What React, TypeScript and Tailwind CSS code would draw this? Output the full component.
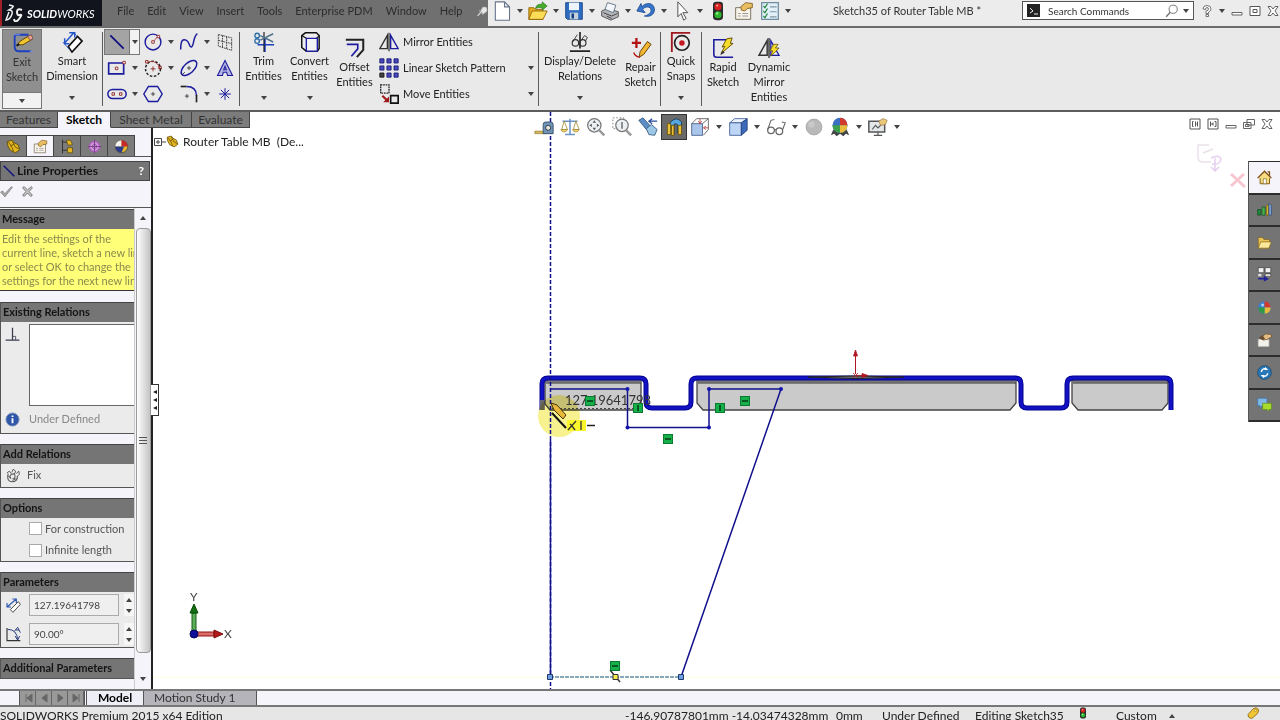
import clsx from "clsx";
import React from "react";

const NAVY = "#1b1b9e";

// Every glyph is drawn on a 24x24 grid.
const glyphs: Record<string, React.ReactNode> = {
  exitSketch: (
    <>
      <path d="M19 3H6q-2 0-2 2v11q0 5 5 5h13" stroke="#1c3fbf" strokeWidth="2" />
      <path d="M3 3h7M20 21h4" stroke="#7d9ae8" strokeWidth="1" />
      <path d="M7 14l3-4 10-6 3 4-10 6z" fill="#f0c530" stroke="#5c4300" />
      <path d="M18 5l4-2 2 4-3 2z" fill="#e7a49a" stroke="#6b3a33" strokeWidth=".8" />
      <path d="M6 15l3-2" stroke="#111" strokeWidth="2" />
    </>
  ),
  smartDim: (
    <>
      <path d="M8 17L18 6l5 5-11 12z" fill="#fff" stroke="#111" strokeWidth="1.8" />
      <path d="M4 13L14 2M4 8v6h5M9 2h6v5" stroke="#2456c8" strokeWidth="1.6" />
      <path d="M2 12l7 8M13 1l4 4" stroke="#2456c8" strokeWidth="1" />
    </>
  ),
  line: <path d="M4 4l16 16" stroke="#0d0d80" strokeWidth="2" />,
  circle: (
    <>
      <circle cx="12" cy="12" r="9.500" stroke={NAVY} strokeWidth="1.7" />
      <path d="M12 12l6-7" stroke="#a33" />
      <path d="M10.500 10.500h3v3h-3zM17 4h3v3h-3z" fill="#fff" stroke="#8b1a1a" />
    </>
  ),
  spline: <path d="M2 21C2 9 5 8 9 10s3 9 6 8 2-13 7-16" stroke={NAVY} strokeWidth="1.8" />,
  plane: (
    <path d="M4 3l16 4v15L4 17zM4 10l16 4M9 4v14M14 6v14" stroke="#444" strokeWidth="1.200" strokeDasharray="2 1" />
  ),
  rect: (
    <>
      <path d="M2 6h18v13H2z" stroke={NAVY} strokeWidth="2" />
      <path d="M10 11h3v3h-3zM19 4h3v3h-3z" fill="#fff" stroke="#8b1a1a" />
    </>
  ),
  arc: (
    <>
      <circle cx="12" cy="13" r="9" stroke="#222" strokeWidth="1.8" strokeDasharray="3 2" />
      <path d="M6 5a10 10 0 0 1 14 8" stroke="#a33" />
      <path d="M12 10v6M9 13h6M3 3h3v3H3zM19 10h3v3h-3z" stroke="#8b1a1a" />
    </>
  ),
  ellipse: (
    <>
      <ellipse cx="12" cy="12" rx="11.500" ry="6" transform="rotate(-42 12 12)" stroke={NAVY} strokeWidth="1.8" />
      <path d="M12 9.500v5M9.500 12h5M4 20l3-3" stroke="#333" />
    </>
  ),
  letterA: (
    <path d="M3 21L12 3l9 18h-6l-1-4h-4l-1 4zM10.500 14h3L12 10z" fill="#b5b5e2" stroke={NAVY} strokeWidth="1.3" />
  ),
  slot: (
    <>
      <rect x="1" y="6.500" width="22" height="11" rx="5.500" stroke={NAVY} strokeWidth="1.8" />
      <path d="M6 10.500h3v3H6zM15 10.500h3v3h-3z" stroke="#8b1a1a" />
    </>
  ),
  polygon: (
    <>
      <path d="M6.500 3h11l5.500 9-5.500 9h-11L1 12z" stroke={NAVY} strokeWidth="1.7" />
      <path d="M12 9.500v5M9.500 12h5" stroke="#333" />
    </>
  ),
  fillet: (
    <>
      <path d="M2 3h7" stroke="#222" strokeWidth="2" />
      <path d="M9 3q12 0 12 11" stroke={NAVY} strokeWidth="1.6" />
      <path d="M21 13v9" stroke="#222" strokeWidth="2" />
      <path d="M9.500 12v5M7 14.500h5" stroke="#333" />
    </>
  ),
  point: <path d="M12 5v14M5 12h14M7 7l10 10M17 7L7 17" stroke={NAVY} strokeWidth="1.2" />,
  trim: (
    <>
      <path d="M13 8v15M5 15h18" stroke="#1c3fbf" strokeWidth="1.8" />
      <path d="M12 1v22" stroke="#111" strokeWidth="1.2" />
      <path d="M22 3L8 10M22 12L8 5" stroke="#50718a" strokeWidth="1.6" />
      <circle cx="4.500" cy="5" r="2.500" stroke="#2d6fa8" strokeWidth="1.5" />
      <circle cx="4.500" cy="11" r="2.500" stroke="#2d6fa8" strokeWidth="1.5" />
    </>
  ),
  convert: (
    <>
      <path d="M3 5l4-3h12l3 3v14l-2 3H8l-5-4z" fill="#eee" stroke="#111" strokeWidth="1.600" />
      <path d="M3 5l5 3M22 5l-3 3" stroke="#111" strokeWidth="1.3" />
      <path d="M8 8h12v14H8z" stroke="#1c1ca8" strokeWidth="1.5" fill="#f4f4f4" />
    </>
  ),
  offset: (
    <>
      <path d="M2 3h19v11l-7 8" stroke="#222" strokeWidth="2.200" />
      <path d="M3 8h12v5l-7 8" stroke={NAVY} strokeWidth="1.8" />
    </>
  ),
  mirror: (
    <>
      <path d="M12 1v22" stroke="#222" strokeWidth="1.4" />
      <path d="M10 4v16H1z" stroke="#333" strokeWidth="1.600" />
      <path d="M14 4v16h9z" stroke={NAVY} strokeWidth="1.600" />
    </>
  ),
  pattern: (
    <>
      <path d="M1 1h5v5H1zM9.500 1h5v5h-5zM18 1h5v5h-5zM1 9.500h5v5H1zM9.500 9.500h5v5h-5zM18 9.500h5v5h-5zM9.500 18h5v5h-5zM18 18h5v5h-5z" fill="#4a4ac0" stroke="#15156e" />
      <path d="M1 18h5v5H1z" fill="#444" stroke="#111" />
    </>
  ),
  move: (
    <>
      <path d="M2 1h10v10H2z" stroke="#222" strokeWidth="1.600" strokeDasharray="2 1" />
      <path d="M14 14h9v9h-9z" stroke="#111" strokeWidth="2" />
      <path d="M4 14l5 5" stroke="#a01818" strokeWidth="2.500" />
      <path d="M12 22H5l7-7z" fill="#a01818" />
    </>
  ),
  relations: (
    <>
      <path d="M12 1v18M1 22h22" stroke="#222" strokeWidth="1.8" />
      <circle cx="7" cy="13" r="3.500" stroke="#333" strokeWidth="1.300" />
      <circle cx="15" cy="13" r="3.500" stroke="#333" strokeWidth="1.300" />
      <path d="M4 12l5-8M12 12l5-7 3 2M18 11l2-4" stroke="#333" />
    </>
  ),
  repair: (
    <>
      <path d="M7 1v11M2 6.500h10" stroke="#b31212" strokeWidth="2.500" />
      <path d="M11 16l8-11 4 3-8 11-5 3z" fill="#f2b632" stroke="#5c3a00" />
      <path d="M4 17q2 5 7 5" stroke="#b31212" strokeWidth="1.500" />
    </>
  ),
  snaps: (
    <>
      <path d="M2 23V2h20" stroke="#a01820" strokeWidth="2" />
      <circle cx="13" cy="13" r="8" stroke="#222" strokeWidth="1.800" />
      <circle cx="13" cy="13" r="3" fill="#c41822" />
    </>
  ),
  rapid: (
    <>
      <path d="M17 3H2v16q0 3 3 3h18" stroke={NAVY} strokeWidth="1.700" />
      <path d="M16 2l6-1-2 6h3L10 18l4-8-3 1z" fill="#f8dc2c" stroke="#5c4a00" />
      <path d="M9 20l2-5 3 2z" fill="#333" />
    </>
  ),
  dynamicMirror: (
    <>
      <path d="M12 1v22" stroke="#222" strokeWidth="1.400" />
      <path d="M10 4v16H1z" stroke="#333" strokeWidth="1.600" />
      <path d="M14 4v16h9z" stroke={NAVY} strokeWidth="1.400" />
      <path d="M17 8h5l-3 4h4l-9 9 2-6h-3z" fill="#f8dc2c" stroke="#5c4a00" strokeWidth=".8" />
    </>
  ),
  newDoc: <path d="M4 1h11l6 6v16H4zM15 1v6h6" fill="#fff" stroke="#667389" strokeWidth="1.300" />,
  open: (
    <>
      <path d="M1 22V8h6l2 2h9v12z" fill="#e5a91c" stroke="#8a6000" />
      <path d="M1 22l4-10h18l-5 10z" fill="#fbdc56" stroke="#8a6000" />
      <path d="M9 9q1-6 8-5V1l6 5-6 5V8q-5-1-8 1z" fill="#45ae2b" stroke="#1f6d14" strokeWidth=".7" />
    </>
  ),
  save: (
    <>
      <path d="M2 2h20v20H4l-2-2z" fill="#2d6cc0" stroke="#123e80" />
      <path d="M6 2h12v9H6z" fill="#eef4fb" />
      <path d="M7 14h10v8H7z" fill="#c5cfdb" />
      <path d="M9 15h3v6H9z" fill="#123e80" />
    </>
  ),
  print: (
    <>
      <path d="M2 12l7-3 13 4v6l-9 4-11-5z" fill="#b4b6ba" stroke="#444" />
      <path d="M6 10l3-8 10 3-3 9z" fill="#f4f7fc" stroke="#567" />
      <path d="M4 14l10 4 7-3M8 18l6 3" stroke="#333" />
    </>
  ),
  undo: (
    <path d="M6 3L1 12l10 2-3-4c3-4 10-4 10 1 0 4-4 6-8 7 9 2 13-4 12-9C21 2 12 1 7 7z" fill="#3776cf" stroke="#1e4788" />
  ),
  cursor: <path d="M7 1l12 13h-6l4 7-3 2-3-8-4 4z" fill="#fdfdfd" stroke="#555" strokeWidth="1.200" />,
  traffic: (
    <>
      <rect x="6" y="1" width="12" height="22" rx="4" fill="#2b2b2b" />
      <circle cx="12" cy="7" r="4.300" fill="#d92020" />
      <circle cx="12" cy="16.500" r="4.300" fill="#2bb52b" />
      <circle cx="11" cy="5.500" r="1.300" fill="#ff9a9a" />
      <circle cx="11" cy="15" r="1.400" fill="#aaf59a" />
    </>
  ),
  props: (
    <>
      <path d="M2 8h18v14H2z" fill="#f8f4ea" stroke="#665c48" />
      <path d="M5 15h3M5 18h3M10 15h7M10 18h7" stroke="#888" />
      <path d="M8 7l6-5 8 1v5l-6 1-3 3-4-1z" fill="#e9bd62" stroke="#7d5818" />
    </>
  ),
  options: (
    <>
      <path d="M2 2h20v20H2z" fill="#e2eff6" stroke="#6e8da0" strokeWidth="1.500" />
      <path d="M12 7h8M12 13h8M12 19h8" stroke="#7c98a8" strokeWidth="1.300" />
      <path d="M4 6l2 2 3-5M4 12l2 2 3-5M4 18l2 2 3-5" stroke="#2d8a4b" strokeWidth="1.500" />
    </>
  ),
  tape: (
    <>
      <path d="M1 17h13v3H1z" fill="#d8bb55" stroke="#7e6820" strokeWidth=".7" />
      <path d="M11 9q0-3 3-3h6q3 0 3 3v11H11z" fill="#6d93b8" stroke="#31455a" />
      <circle cx="17" cy="13" r="3" fill="#e8e8e8" stroke="#222" />
    </>
  ),
  scales: (
    <>
      <path d="M12 2v18M3 5h18M6 21h12" stroke="#6a92c4" strokeWidth="1.800" />
      <path d="M5 5l-3 10h7zM19 5l-3 10h7z" stroke="#a88b34" />
      <path d="M1 15h8q-1 3-4 3t-4-3zM15 15h8q-1 3-4 3t-4-3z" fill="#ecd06c" stroke="#94772a" strokeWidth=".7" />
    </>
  ),
  zoomFit: (
    <>
      <circle cx="10" cy="10" r="8" fill="#edf0f2" stroke="#777" strokeWidth="1.500" />
      <path d="M10 4l2 3H8zM10 16l2-3H8zM4 10l3-2v4zM16 10l-3-2v4z" fill="#555" />
      <path d="M16 16l6 6" stroke="#999" strokeWidth="3" />
    </>
  ),
  zoomArea: (
    <>
      <path d="M1 1h13v13H1z" stroke="#777" strokeDasharray="2 2" />
      <circle cx="12" cy="10" r="7.500" fill="#edf0f2" stroke="#777" strokeWidth="1.500" />
      <path d="M12 6v8" stroke="#555" strokeWidth="1.500" />
      <path d="M17 16l6 6" stroke="#999" strokeWidth="3" />
    </>
  ),
  prevView: (
    <>
      <path d="M1 4l5-3 9 10-5 4z" fill="#5b8ec7" stroke="#31547e" />
      <path d="M10 14l6-5 7 6-3 7-7-1z" fill="#9cc8e6" stroke="#31547e" />
      <path d="M13 5h10M17 2l-4 3 4 3" stroke="#2a4f9c" strokeWidth="1.500" />
    </>
  ),
  section: (
    <>
      <path d="M7 7q8-9 14-1v13h-5V9q-2-2-4 0v11z" fill="#57a8e0" stroke="#17314a" />
      <path d="M4 8h4v13H4zM9 10h3v12H9zM17 10h4v11h-4z" fill="#e9c13a" stroke="#6c5200" />
    </>
  ),
  viewCube: (
    <>
      <path d="M2 8l6-6h14v13l-6 7" fill="#fff" stroke="#555" />
      <path d="M2 8h13v14H2z" fill="#a9c6ea" stroke="#425a86" />
      <path d="M15 8l7-6" stroke="#555" />
      <path d="M12 2v6M17 13h5M10 5l2 3 2-3M19 11l-3 2 3 2" stroke="#b33a3a" />
    </>
  ),
  cube: (
    <>
      <path d="M2 7l6-5h15l-7 5z" fill="#edf4fd" stroke="#3c5a94" />
      <path d="M2 7h14v15H2z" fill="#bdd6f5" stroke="#3c5a94" />
      <path d="M16 7l7-5v14l-7 6z" fill="#3c69ba" stroke="#233f76" />
    </>
  ),
  glasses: (
    <>
      <circle cx="6" cy="16" r="4" stroke="#666" strokeWidth="1.500" />
      <circle cx="16" cy="17" r="4" stroke="#666" strokeWidth="1.500" />
      <path d="M2 15L6 4l4-1M10 16q1-2 2 0M20 15l3-8-4-1" stroke="#666" strokeWidth="1.300" />
    </>
  ),
  sphere: (
    <>
      <circle cx="12" cy="12" r="9.500" fill="#b9b9b9" stroke="#a3a3a3" />
      <circle cx="9" cy="9" r="4" fill="#c8c8c8" />
    </>
  ),
  globe: (
    <>
      <circle cx="12" cy="12" r="10" fill="#3a7fd4" />
      <path d="M12 2a10 10 0 0 1 10 10H12z" fill="#d33a2e" />
      <path d="M22 12a10 10 0 0 1-10 10V12z" fill="#e9bc3b" />
      <path d="M12 22A10 10 0 0 1 2 12h10z" fill="#2f9a44" />
      <circle cx="9" cy="8" r="2.500" fill="#a8d4f5" />
    </>
  ),
  appearance: (
    <>
      <path d="M1 22l3-7h16l3 7-4-2-3 3-4-3-4 3-3-3z" fill="#444" />
      <circle cx="12" cy="10" r="9" fill="#3a6fc4" />
      <path d="M12 1a9 9 0 0 1 9 9h-9z" fill="#d33a2e" />
      <path d="M21 10a9 9 0 0 1-9 9v-9z" fill="#e9bc3b" />
      <path d="M12 19a9 9 0 0 1-9-9h9z" fill="#3ba14b" />
    </>
  ),
  scene: (
    <>
      <path d="M1 5h19v13H1z" fill="#e3e7ea" stroke="#555" strokeWidth="1.800" />
      <path d="M5 15l4-5 3 3 5-5M7 22h10M12 18v4" stroke="#555" strokeWidth="1.400" />
      <path d="M13 5l5-3 5 2-2 5-6 1z" fill="#e9c979" stroke="#98743a" strokeWidth=".8" />
    </>
  ),
  part: (
    <>
      <path d="M2 4l8-2 3 4 6 3 3 8-7 5-8-4-4-7z" fill="#e3b721" stroke="#5b4400" strokeWidth="1.300" />
      <path d="M4 5l6 9 2 6M10 4l5 9 6 3M7 11l6-3" stroke="#5b4400" strokeWidth="1.300" />
    </>
  ),
  config: (
    <>
      <path d="M4 1v22M4 5h8M4 18h8" stroke="#222" strokeWidth="1.300" />
      <path d="M10 2l7 0 3 7-7 1zM12 14h8v8h-8z" fill="#e3b721" stroke="#4d3a00" />
    </>
  ),
  target: (
    <>
      <circle cx="12" cy="12" r="8" stroke="#b45bc4" strokeWidth="2" fill="#cf9bd8" />
      <circle cx="12" cy="12" r="3.500" stroke="#7b3a8c" />
      <path d="M12 1v22M1 12h22" stroke="#7b3a8c" strokeWidth="1.500" />
    </>
  ),
  ball: (
    <>
      <circle cx="12" cy="12" r="10" fill="#e6b62c" stroke="#333" />
      <path d="M12 2A10 10 0 0 0 2 12h10z" fill="#f1f1f1" />
      <path d="M12 2a10 10 0 0 1 10 10H12z" fill="#c62a2a" />
      <path d="M2 12a10 10 0 0 0 10 10l4-10z" fill="#2c3c8c" />
    </>
  ),
  home: (
    <>
      <path d="M5 12v10h15V12" fill="#f6dc80" stroke="#7c5a12" strokeWidth="1.500" />
      <path d="M1 13L12 2l11 11" stroke="#7c4a12" strokeWidth="2" fill="#f6dc80" />
      <path d="M10 14h5v8h-5z" fill="#fff" stroke="#7c5a12" />
      <path d="M17 3h3v6" stroke="#7c4a12" strokeWidth="2" />
    </>
  ),
  library: (
    <>
      <path d="M1 12h5v9H1z" fill="#1f8a3b" stroke="#0c4419" />
      <path d="M8 8h5v13H8z" fill="#46b04a" stroke="#0c4419" />
      <path d="M15 5h3v16h-3z" fill="#e6c42c" stroke="#6a5600" />
      <path d="M19 2l4 3v16h-4z" fill="#7ea4dc" stroke="#2a3f66" />
    </>
  ),
  folder: (
    <>
      <path d="M2 21V4h7l2 3h9v14z" fill="#e8c256" stroke="#7a5d14" />
      <path d="M2 21l4-10h17l-4 10z" fill="#fbe89a" stroke="#7a5d14" />
    </>
  ),
  palette: (
    <>
      <path d="M2 1h9v8H2zM13 1h9v8h-9zM13 11h9v4h-9z" fill="#f1f1f1" stroke="#333" />
      <path d="M2 11h5v4H2z" fill="#ddd" />
      <path d="M2 17h9v-3l8 5-8 4v-3H2z" fill="#22229a" />
    </>
  ),
  customProps: (
    <>
      <path d="M2 12h17v11H2z" fill="#f4f1ea" stroke="#ccc" />
      <path d="M7 8l7-5 9 1v4l-7 4-6 1z" fill="#e2bd83" stroke="#5f4523" />
      <path d="M3 9l6-4 4 6-4 2z" fill="#6a4c30" />
    </>
  ),
  refresh: (
    <>
      <circle cx="12" cy="12" r="11" fill="#2878b8" stroke="#123f68" />
      <path d="M7 11a5 5 0 0 1 8-4M17 13a5 5 0 0 1-8 4" stroke="#fff" strokeWidth="2.200" />
      <path d="M13 3l5 5h-6zM11 21l-5-5h6z" fill="#fff" />
    </>
  ),
  forum: (
    <>
      <path d="M1 2h15v12H8l-3 4v-4H1z" fill="#7fb6e6" stroke="#3670a6" />
      <path d="M9 10h14v10h-4v3l-3-3H9z" fill="#a8dc2c" stroke="#5c8a10" />
    </>
  ),
  perpendicular: (
    <>
      <path d="M12 1v20M1 21h22" stroke="#3c3c50" strokeWidth="2" />
      <path d="M12 15h5v6" stroke="#3c3c50" strokeWidth="1.300" />
    </>
  ),
  info: (
    <>
      <circle cx="12" cy="12" r="10.500" fill="#2f56a8" stroke="#8095bd" strokeWidth="1.500" />
      <path d="M12 10v8M12 5.500v2.500" stroke="#fff" strokeWidth="3" />
    </>
  ),
  fix: (
    <>
      <path d="M5 9q-3 12 6 13 9 0 9-9M9 17q-3-5 2-7t5 3-4 4" stroke="#555" strokeWidth="1.700" />
      <path d="M3 8l4-3 3 4M11 7l2-5 4 3-2 5M18 9l4-4 1 5-4 4M5 13l5 3M12 20l6-3" stroke="#555" strokeWidth="1.500" />
    </>
  ),
  length: (
    <>
      <path d="M8 19L20 7l3 4-11 12z" fill="#fff" stroke="#333" strokeWidth="1.300" />
      <path d="M3 15L17 3M3 9v6h6M11 3h6v6" stroke="#2d56b0" strokeWidth="1.700" />
    </>
  ),
  angle: (
    <>
      <path d="M3 3v19h20" stroke="#333" strokeWidth="1.700" />
      <path d="M4 5q14 0 15 16M15 15l4 6 3-6M14 8l5-6 4 8M16 6h5" stroke="#2a3f7c" strokeWidth="1.500" />
    </>
  ),
  tag: (
    <>
      <path d="M2 15L13 3q6-3 9 1t-1 9L11 22q-5 2-8-2z" fill="#f0c434" stroke="#7c5a00" strokeWidth="1.500" />
      <circle cx="17" cy="7" r="2" fill="#fff7c8" stroke="#7c5a00" />
    </>
  ),
  pin: (
    <>
      <path d="M3 20l6-7" stroke="#ddd" strokeWidth="2" />
      <path d="M6 10l7 8M9 11l4-7 6 1 1 6-6 5z" fill="#e6e6e6" stroke="#ddd" strokeWidth="1.500" />
    </>
  ),
  check: <path d="M1 13l4-2 4 5L21 3l2 1L9 22z" fill="#a8a8a8" stroke="#666" />,
  cross: <path d="M3 5l3-2 6 6 7-6 2 2-6 7 6 7-3 2-6-6-6 6-3-2 6-7z" fill="#c4c4c4" stroke="#666" strokeWidth="1.500" />,
  help: (
    <path d="M4 8q0-7 8-7t8 7q0 4-5 6v3h-5v-5q5-1 5-4t-3-3-3 4zM10 19h5v4h-5z" fill="#fff" stroke="#555" strokeWidth="1.600" />
  ),
  winMin: <path d="M2 15h20v5H2z" fill="#fff" stroke="#555" strokeWidth="1.800" />,
  winMax: <path d="M2 3h20v18H2zM8 9h8v6H8z" fill="#fff" stroke="#555" strokeWidth="2" />,
  winRestore: <path d="M8 3h15v11H8zM1 9h15v12H1zM5 13h7v4H5z" fill="#fff" stroke="#555" strokeWidth="1.800" />,
  winClose: <path d="M2 3h6l4 5 4-5h6l-6 9 6 9h-6l-4-5-4 5H2l6-9z" fill="#fff" stroke="#555" strokeWidth="1.800" />,
  splitLeft: <path d="M2 2h20v20H2zM9 7H7v10h2M13 7v10M17 7v10M15 12h2" fill="#fff" stroke="#555" strokeWidth="2" />,
  splitRight: <path d="M2 2h20v20H2zM7 7v10M7 12h5M15 7h3v10h-3M12 9v6" fill="#fff" stroke="#555" strokeWidth="2" />,
  magnifier: (
    <>
      <circle cx="14" cy="9" r="7" fill="#fff" stroke="#777" strokeWidth="1.700" />
      <path d="M9 14l-7 8" stroke="#777" strokeWidth="2.500" />
    </>
  ),
};

function Glyph({ name, className = "size-6" }: { name: string; className?: string }) {
  return (
    <svg viewBox="0 0 24 24" fill="none" className={clsx("shrink-0", className)} aria-hidden="true">
      {glyphs[name]}
    </svg>
  );
}

function Caret({ className }: { className?: string }) {
  return (
    <svg viewBox="0 0 6 4" className={clsx("w-[6px] h-[4px] shrink-0", className)} aria-hidden="true">
      <path d="M0 0h6L3 4z" fill="#444" />
    </svg>
  );
}

function CaretButton({ label, className = "w-[10px]" }: { label: string; className?: string }) {
  return (
    <button aria-label={`${label} options`} className={clsx("flex h-full items-center justify-center", className)}>
      <Caret />
    </button>
  );
}

const menus = ["File", "Edit", "View", "Insert", "Tools", "Enterprise PDM", "Window", "Help"];

const quickTools = [
  { icon: "newDoc", label: "New", menu: true },
  { icon: "open", label: "Open", menu: true },
  { icon: "save", label: "Save", menu: true },
  { icon: "print", label: "Print", menu: true },
  { icon: "undo", label: "Undo", menu: true },
  { icon: "cursor", label: "Select", menu: true },
  { icon: "traffic", label: "Rebuild", menu: false },
  { icon: "props", label: "File Properties", menu: false },
  { icon: "options", label: "Options", menu: true },
];

function TitleBar() {
  return (
    <header className="flex h-7 shrink-0 items-stretch border-b-2 border-[#6c6c6c] bg-[#ececec]">
      <div className="flex w-[102px] items-center gap-1 border-l-2 border-[#a02028] bg-[#12141d] pl-[3px] text-white">
        <svg viewBox="0 0 18 18" className="size-[18px]" fill="none" stroke="#f2f2f2" strokeWidth="1.500" aria-hidden="true">
          <path d="M4 1l4 1q1 1-4 4 4 0 3 4-2 6-6 6l3-8" />
          <path d="M17 6q-5-2-5 2t3 3-1 4-5 0" strokeWidth="2" />
        </svg>
        <span className="text-[11px] italic leading-none"><b>SOLID</b>WORKS</span>
      </div>
      <nav className="flex w-[386px] items-center gap-[13px] bg-[#707070] pb-1 pl-[15px] text-[11px] text-[#2c2c2c]">
        {menus.map((menu) => (
          <button key={menu} className="whitespace-nowrap">{menu}</button>
        ))}
        <Glyph name="pin" className="size-[13px]" />
      </nav>
      <div className="flex items-center pb-1 pl-px">
        {quickTools.map((tool) => (
          <React.Fragment key={tool.label}>
            <button aria-label={tool.label} className="flex w-[26px] justify-center">
              <Glyph name={tool.icon} className="size-5" />
            </button>
            {tool.menu && <CaretButton label={tool.label} />}
          </React.Fragment>
        ))}
      </div>
      <h1 className="min-w-0 flex-1 truncate pl-10 text-[11px] leading-[22px] text-[#333]">
        Sketch35 of Router Table MB *
      </h1>
      <label className="my-px mb-[6px] flex w-[172px] items-center border border-[#555] bg-white px-1">
        <svg viewBox="0 0 13 13" className="size-[13px] shrink-0" aria-hidden="true">
          <path d="M0 0h13v13H0z" fill="#222" />
          <path d="M3 4l3 3-3 2M7 10h4" fill="none" stroke="#eee" />
        </svg>
        <input aria-label="Search Commands" placeholder="Search Commands" className="ml-2 min-w-0 flex-1 text-[10px] leading-4 outline-none placeholder:text-[#333]" />
        <Glyph name="magnifier" className="size-[14px]" />
        <Caret className="ml-1" />
      </label>
      <div className="flex items-center gap-[6px] pb-1 pl-[7px] pr-px">
        <button aria-label="Help"><Glyph name="help" className="size-3" /></button>
        <Caret />
        <button aria-label="Minimize"><Glyph name="winMin" className="size-3" /></button>
        <button aria-label="Maximize"><Glyph name="winMax" className="size-3" /></button>
        <button aria-label="Close"><Glyph name="winClose" className="size-3" /></button>
      </div>
    </header>
  );
}

interface BigButtonProps {
  icon: string;
  lines: string[];
  width: string;
  menu?: boolean;
  low?: boolean;
}

function BigButton({ icon, lines, width, menu, low }: BigButtonProps) {
  return (
    <button className={clsx("flex flex-col items-center text-[11px] leading-[15px] text-[#222]", low ? "pt-[9px]" : "pt-[3px]", width)}>
      <Glyph name={icon} className="size-[22px]" />
      {lines.map((line) => (
        <span key={line} className="whitespace-nowrap">{line}</span>
      ))}
      {menu && <Caret className="mt-auto mb-[10px]" />}
    </button>
  );
}

function Divider() {
  return <div className="my-1 w-px bg-[#5a5a5a]" />;
}

const sketchTools = [
  ["line", "circle", "spline", "plane"],
  ["rect", "arc", "ellipse", "letterA"],
  ["slot", "polygon", "fillet", "point"],
];

const listTools = [
  { icon: "mirror", label: "Mirror Entities", menu: false },
  { icon: "pattern", label: "Linear Sketch Pattern", menu: true },
  { icon: "move", label: "Move Entities", menu: true },
];

function Ribbon() {
  return (
    <div className="flex h-[84px] shrink-0 items-stretch border-b-2 border-[#5c5c5c] bg-[#e9e9e9] pl-[2px]">
      <button className="my-px flex w-10 flex-col items-center border border-[#777] bg-[#8f8f8f] pt-[2px] text-[11px] leading-[15px] text-[#333]">
        <Glyph name="exitSketch" className="size-[22px]" />
        <span>Exit</span>
        <span>Sketch</span>
        <span className="mt-auto flex h-4 w-full items-center justify-center border-t border-[#777] bg-[#f2f2f2]">
          <Caret />
        </span>
      </button>
      <BigButton icon="smartDim" lines={["Smart", "Dimension"]} width="w-[60px]" menu />
      <Divider />
      <div className="flex flex-col px-px pt-px">
        {sketchTools.map((row) => (
          <div key={row[0]} className="flex h-[26px]">
            {row.map((tool, i) => (
              <React.Fragment key={tool}>
                <button
                  aria-label={tool}
                  className={clsx("flex w-[26px] items-center justify-center", tool === "line" && "border border-[#777] bg-[#a4a4a4]")}
                >
                  <Glyph name={tool} className="size-5" />
                </button>
                {i < 3 && tool !== "polygon" && (
                  <CaretButton
                    label={tool}
                    className={tool === "line" ? "w-[10px] border border-l-0 border-[#777] bg-[#f2f2f2]" : "w-[10px]"}
                  />
                )}
                {tool === "polygon" && <span className="w-[10px]" />}
              </React.Fragment>
            ))}
          </div>
        ))}
      </div>
      <Divider />
      <BigButton icon="trim" lines={["Trim", "Entities"]} width="w-[47px]" menu />
      <BigButton icon="convert" lines={["Convert", "Entities"]} width="w-[45px]" menu />
      <BigButton icon="offset" lines={["Offset", "Entities"]} width="w-[45px]" low />
      <div className="flex w-[161px] flex-col pt-px pl-[2px]">
        {listTools.map((tool) => (
          <div key={tool.label} className="flex h-[26px] items-center justify-between">
            <button className="flex items-center gap-1 whitespace-nowrap text-[11px] text-[#222]">
              <Glyph name={tool.icon} className="size-5" />
              {tool.label}
            </button>
            {tool.menu && <CaretButton label={tool.label} className="w-[14px]" />}
          </div>
        ))}
      </div>
      <Divider />
      <BigButton icon="relations" lines={["Display/Delete", "Relations"]} width="w-[82px]" menu />
      <BigButton icon="repair" lines={["Repair", "Sketch"]} width="w-[39px]" low />
      <Divider />
      <BigButton icon="snaps" lines={["Quick", "Snaps"]} width="w-[40px]" menu />
      <Divider />
      <BigButton icon="rapid" lines={["Rapid", "Sketch"]} width="w-[42px]" low />
      <BigButton icon="dynamicMirror" lines={["Dynamic", "Mirror", "Entities"]} width="w-[50px]" low />
    </div>
  );
}

const commandTabs = ["Features", "Sketch", "Sheet Metal", "Evaluate"];
const managerTabs = ["part", "props", "config", "target", "ball"];

function SectionHeader({ children }: { children: React.ReactNode }) {
  return (
    <h3 className="flex h-5 shrink-0 items-center border-t border-[#444] bg-[#757575] pl-[2px] text-[11px] font-bold text-[#141414]">
      {children}
    </h3>
  );
}

function Section({ title, children }: { title: string; children?: React.ReactNode }) {
  return (
    <section className="mb-[10px] border-b border-l border-[#555] bg-[#ebebeb]">
      <SectionHeader>{title}</SectionHeader>
      {children}
    </section>
  );
}

function NumberField({ icon, label, value }: { icon: string; label: string; value: string }) {
  return (
    <label className="flex h-[22px] items-center">
      <span className="w-7 pl-1"><Glyph name={icon} className="size-4" /></span>
      <input aria-label={label} defaultValue={value} className="h-full w-[90px] border border-[#aaa] bg-[#efefef] pl-1 text-[10px] text-[#444] outline-none" />
      <span className="ml-auto flex h-full w-[10px] flex-col items-center justify-around bg-[#f6f6f6]">
        <Caret className="rotate-180" />
        <Caret />
      </span>
    </label>
  );
}

function PropertyPanel() {
  return (
    <aside className="relative flex w-[153px] shrink-0 flex-col border-r-2 border-[#222] bg-[#f4f4fa]">
      <div className="relative z-10 flex h-4 w-max shrink-0 items-stretch text-[12px] leading-4 text-[#333]">
        {commandTabs.map((tab) => (
          <button
            key={tab}
            className={clsx(
              "border-r border-b border-[#444] whitespace-nowrap",
              tab === "Sketch" ? "w-[53px] border-b-transparent bg-[#f4f4fa] font-bold text-black" : "bg-[#7c7c7c]",
              tab === "Features" && "w-[58px]",
              tab === "Sheet Metal" && "w-[81px]",
              tab === "Evaluate" && "w-[58px]",
            )}
          >
            {tab}
          </button>
        ))}
      </div>
      <div className="mt-[7px] flex h-[22px] shrink-0 border-b border-[#555]">
        {managerTabs.map((tab) => (
          <button
            key={tab}
            aria-label={tab}
            className={clsx("flex w-[27px] items-center justify-center border-t border-r border-[#444]", tab === "props" ? "bg-[#f4f4fa]" : "bg-[#7c7c7c]")}
          >
            <Glyph name={tab} className="size-[15px]" />
          </button>
        ))}
      </div>
      <div className="mt-1 mr-px flex h-5 shrink-0 items-center border border-[#444] bg-[#757575] pr-[5px] text-[12px] font-bold text-[#141414]">
        <Glyph name="line" className="size-4" />
        <h2>Line Properties</h2>
        <button aria-label="Help" className="ml-auto text-white">?</button>
      </div>
      <div className="flex h-[27px] shrink-0 gap-2 border-b border-[#555] pt-1">
        <button aria-label="OK" className="self-start"><Glyph name="check" className="size-[13px]" /></button>
        <button aria-label="Cancel" className="self-start"><Glyph name="cross" className="size-[13px]" /></button>
      </div>
      <div className="flex min-h-0 flex-1">
        <div className="min-w-0 flex-1 overflow-hidden pt-px">
          <section className="mb-[11px] border-b border-[#333]">
            <SectionHeader>Message</SectionHeader>
            <p className="h-[61px] overflow-hidden bg-[#ffff78] pt-[3px] pl-[2px] text-[11px] leading-[14px] whitespace-nowrap text-[#8a8a50]">
              Edit the settings of the<br />
              current line, sketch a new line<br />
              or select OK to change the<br />
              settings for the next new line
            </p>
          </section>
          <Section title="Existing Relations">
            <div className="flex h-[84px] pt-[2px]">
              <Glyph name="perpendicular" className="mt-[3px] mr-[9px] ml-1 size-[15px]" />
              <select multiple aria-label="Existing Relations" className="h-[82px] flex-1 border-y border-l border-[#666] bg-white" />
            </div>
            <p className="flex h-[27px] items-center gap-[9px] pl-1 text-[11px] text-[#888]">
              <Glyph name="info" className="size-[15px]" />
              Under Defined
            </p>
          </Section>
          <Section title="Add Relations">
            <button className="flex h-[23px] items-center gap-[7px] pl-1 text-[11px] text-[#555]">
              <Glyph name="fix" className="size-[15px]" />
              Fix
            </button>
          </Section>
          <Section title="Options">
            <div className="flex h-[43px] flex-col pl-7 text-[11px] text-[#555]">
              {["For construction", "Infinite length"].map((option) => (
                <label key={option} className="flex h-[22px] items-center gap-[3px] whitespace-nowrap">
                  <input type="checkbox" className="size-[13px] appearance-none border border-[#aaa] bg-white" />
                  {option}
                </label>
              ))}
            </div>
          </Section>
          <Section title="Parameters">
            <div className="flex flex-col gap-[7px] py-[2px]">
              <NumberField icon="length" label="Length" value="127.19641798" />
              <NumberField icon="angle" label="Angle" value="90.00°" />
            </div>
          </Section>
          <Section title="Additional Parameters" />
        </div>
        <div className="flex w-[17px] flex-col items-center border-l border-[#ccc] bg-[#f4f4fa]">
          <Caret className="my-2 shrink-0 rotate-180" />
          <div className="flex w-[15px] flex-1 flex-col items-center justify-center gap-[2px] rounded-sm border border-[#999] bg-linear-to-r from-white to-[#c4c4c4]">
            <span className="h-px w-2 bg-[#555]" />
            <span className="h-px w-2 bg-[#555]" />
            <span className="h-px w-2 bg-[#555]" />
          </div>
          <Caret className="mt-6 mb-2 shrink-0" />
        </div>
      </div>
      <button aria-label="Collapse panel" className="absolute top-[272px] -right-2 z-10 flex h-8 w-2 flex-col items-center justify-center gap-1 border border-l-0 border-[#333] bg-white">
        {[0, 1, 2].map((i) => (
          <svg key={i} viewBox="0 0 4 4" className="size-1" aria-hidden="true"><path d="M4 0v4L0 2z" fill="#222" /></svg>
        ))}
      </button>
    </aside>
  );
}

const channel =
  "M542 410V384q0-6 6-6h92q6 0 6 6v18q0 6 6 6h33q6 0 6-6v-18q0-6 6-6h318q6 0 6 6v18q0 6 6 6h34q6 0 6-6v-18q0-6 6-6h92q6 0 6 6v26";

// centre points of the horizontal / vertical relation markers
const relations = [
  { x: 590, y: 401, vertical: false },
  { x: 638, y: 408, vertical: true },
  { x: 720, y: 408, vertical: true },
  { x: 745, y: 401, vertical: false },
  { x: 668, y: 439, vertical: false },
  { x: 615, y: 666, vertical: false },
];

const vertices = [[627.5, 389], [627.5, 427.5], [709, 427.5], [709, 389], [781, 389]];

function ModelDrawing() {
  return (
    <svg viewBox="153 112 1127 577" preserveAspectRatio="xMinYMin meet" className="absolute inset-0 size-full" fill="none" role="img" aria-label="Model view">
      <path d="M153 677.5H1280" stroke="#fffff0" strokeWidth="2" />
      <g fill="#cacaca" stroke="#444" strokeWidth="1.300">
        <path d="M545 380h96v30h-91l-5-6z" />
        <path d="M697 380h319v23l-6 7H703l-6-7z" />
        <path d="M1072 380h96v23l-6 7h-84l-6-7z" />
      </g>
      <path d="M546 381h95M698 381h318M1073 381h95" stroke="#777" strokeWidth="3" />
      <path d="M546 383h95M698 383h318M1073 383h95" stroke="#333" />
      <path d={channel} stroke="#050590" strokeWidth="5" />
      <path d={channel} stroke="#1212c4" strokeWidth="3" />
      <path d="M542 400v10" stroke="#667" strokeWidth="4" />
      <path d="M808 377q48-2 96 0-48 3-96 0z" fill="#777" stroke="#222" />
      <circle cx="559" cy="416" r="21" fill="#f8f190" className="mix-blend-multiply" />
      <path d="M550.5 112v577" stroke="#10108c" strokeWidth="1.500" strokeDasharray="4 2" />
      <path d="M550.5 440v237" stroke="#10108c" strokeWidth="1.500" />
      <path d="M550 389h77.500v38.500H709V389h72L681 677" stroke="#10108c" strokeWidth="1.500" />
      {vertices.map(([x, y]) => (
        <circle key={`${x}-${y}`} cx={x} cy={y} r="2" fill="#1414b0" />
      ))}
      <path d="M552 408.500h90" stroke="#444" strokeDasharray="2 2" />
      <text x="565" y="405" fontSize="13" fill="#333" fontFamily="Lato, sans-serif">127.19641798</text>
      <path d="M550 677h131" stroke="#5f8ca8" strokeWidth="1.500" strokeDasharray="4 1" />
      <path d="M547.500 674.500h5v5h-5zM678.500 674.500h5v5h-5z" fill="#6f9fe0" stroke="#1d3b6c" />
      <path d="M610 670l10 12" stroke="#333" strokeWidth="1.500" />
      <path d="M613 674.500h5v5h-5z" fill="#f8ef4c" stroke="#333" />
      {relations.map(({ x, y, vertical }) => (
        <g key={`${x}-${y}`}>
          <rect x={x - 4.5} y={y - 4.5} width="9" height="9" fill="#16b04a" stroke="#0b7a30" />
          <path d={vertical ? `M${x} ${y - 3}v6` : `M${x - 3} ${y}h6`} stroke="#053d15" strokeWidth="1.500" />
        </g>
      ))}
      <path d="M552 413l14 15" stroke="#111" strokeWidth="2" />
      <path d="M551 403l6 2 9 10-3 4-9-9z" fill="#e8b83a" stroke="#4a3300" />
      <path d="M567 420h19v11h-19z" fill="#fbf52c" />
      <path d="M568 430l8-9M570 424l2 2 3 4M581 421v9" stroke="#333" strokeWidth="1.300" />
      <path d="M587 425.500h8" stroke="#222" strokeWidth="1.500" />
      <g stroke="#b01622" fill="#b01622">
        <path d="M855.500 374v-18" strokeWidth="1" />
        <path d="M855.500 350l2 6h-4zM868 375.500l-6 2v-4zM856 375.500h6M853 373l5 5M858 373l-5 5" strokeWidth=".8" />
      </g>
      <g strokeWidth="1">
        <path d="M192 632v-19h4v19z" fill="#5cae5c" stroke="#155c15" />
        <path d="M194 604l4 9h-8z" fill="#126e12" stroke="#0b4a0b" />
        <path d="M195 632h19v4h-19z" fill="#df6a6a" stroke="#8c1616" />
        <path d="M223 634l-9 4v-8z" fill="#b51818" stroke="#7a1010" />
        <circle cx="194" cy="634" r="4" fill="#10109a" stroke="#05055a" />
      </g>
      <g fontSize="12" fill="#444" fontFamily="Lato, sans-serif">
        <text x="190" y="601">Y</text>
        <text x="224" y="638">X</text>
      </g>
      <g opacity=".25" strokeWidth="1.500">
        <path d="M1209 145h-11v12q0 5 5 5h8M1203 153l10-4" stroke="#a58aa5" />
        <path d="M1211 158q8-4 10 1-1 6-9 5M1215 158v12M1211 167l4 4 4-4" stroke="#a040c0" />
        <path d="M1231 174l14 13M1244 174l-13 12" stroke="#e02040" strokeWidth="3" />
      </g>
    </svg>
  );
}

const viewTools = [
  { icon: "tape", menu: false },
  { icon: "scales", menu: false },
  { icon: "zoomFit", menu: false },
  { icon: "zoomArea", menu: false },
  { icon: "prevView", menu: false },
  { icon: "section", menu: false },
  { icon: "viewCube", menu: true },
  { icon: "cube", menu: true },
  { icon: "glasses", menu: true },
  { icon: "sphere", menu: false },
  { icon: "appearance", menu: true },
  { icon: "scene", menu: true },
];

const windowControls = ["splitLeft", "splitRight", "winMin", "winRestore", "winClose"];
const taskPane = ["home", "library", "folder", "palette", "globe", "customProps", "refresh", "forum"];

function GraphicsArea() {
  return (
    <main className="relative min-w-0 flex-1 bg-white">
      <ModelDrawing />
      <div className="relative flex h-[22px] items-start justify-center pt-[2px]">
        {viewTools.map((tool) => (
          <div key={tool.icon} className="flex h-[26px]">
            <button aria-label={tool.icon} className={clsx("flex w-[26px] items-center justify-center", tool.icon === "section" && "border border-[#333] bg-[#6a6a6a]")}>
              <Glyph name={tool.icon} className="size-5" />
            </button>
            {tool.menu && <CaretButton label={tool.icon} className="w-3" />}
          </div>
        ))}
      </div>
      <div className="absolute top-[6px] right-[7px] flex gap-[6px]">
        {windowControls.map((control) => (
          <button key={control} aria-label={control}><Glyph name={control} className="size-3" /></button>
        ))}
      </div>
      <div className="relative flex w-max items-center pl-px text-[12px] leading-[15px] text-[#222]">
        <svg viewBox="0 0 12 8" className="h-2 w-3" fill="none" stroke="#444" aria-hidden="true">
          <path d="M.5.5h7v7h-7zM2 4h4M4 2v4M8 4h4" />
        </svg>
        <Glyph name="part" className="mr-1 size-[13px]" />
        <span className="whitespace-pre">Router Table MB  (De...</span>
      </div>
      <div className="absolute top-[49px] right-0 flex h-[261px] w-8 flex-col border-l border-[#555]">
        {taskPane.map((item) => (
          <button key={item} aria-label={item} className={clsx("flex flex-1 items-center justify-center border-b-2 border-[#2c2c2c]", item === "home" ? "border-t bg-[#f4f4fa]" : "bg-[#747474]")}>
            <Glyph name={item} className="size-[15px]" />
          </button>
        ))}
      </div>
    </main>
  );
}

const playback = ["M4 2v8M10 2v8L5 6z", "M9 2v8L4 6z", "M4 2v8l5-4z", "M9 2v8M3 2v8l5-4z"];

function BottomTabs() {
  return (
    <div className="flex h-[18px] shrink-0 items-stretch border-y-2 border-t-[#777] border-b-[#777] bg-[#f4f4fa] text-[12px] leading-[14px]">
      <div className="ml-[19px] flex border-x border-[#555]">
        {playback.map((d) => (
          <button key={d} aria-label="Scroll tabs" className="flex w-4 items-center justify-center border-r border-[#666] bg-[#999]">
            <svg viewBox="0 0 12 12" className="size-3" fill="#666" stroke="#666" aria-hidden="true"><path d={d} /></svg>
          </button>
        ))}
      </div>
      <button className="ml-px w-[58px] border-x border-[#555] bg-[#eeeef6] font-bold">Model</button>
      <button className="w-[113px] border-r border-[#555] bg-[#b4b4ba] pl-[10px] text-left text-[#333]">Motion Study 1</button>
    </div>
  );
}

function StatusBar() {
  return (
    <footer className="flex h-[13px] shrink-0 items-start justify-between overflow-hidden bg-[#e6e6e6] text-[12px] leading-[18px] whitespace-nowrap text-[#222]">
      <span>SOLIDWORKS Premium 2015 x64 Edition</span>
      <div className="flex w-[655px]">
        <span className="w-[211px]">-146.90787801mm -14.03474328mm</span>
        <span className="w-[46px]">0mm</span>
        <span className="w-[93px]">Under Defined</span>
        <span className="w-[102px]">Editing Sketch35</span>
        <Glyph name="traffic" className="size-3" />
        <button className="ml-[27px] flex h-[18px] items-center gap-3">
          Custom
          <Caret className="rotate-180" />
        </button>
        <Glyph name="tag" className="mr-[21px] ml-auto size-3" />
      </div>
    </footer>
  );
}

export default function App() {
  return (
    <div className="flex h-screen flex-col overflow-hidden bg-[#e9e9e9] font-['Lato',sans-serif]">
      <TitleBar />
      <Ribbon />
      <div className="flex min-h-0 flex-1">
        <PropertyPanel />
        <GraphicsArea />
      </div>
      <BottomTabs />
      <StatusBar />
    </div>
  );
}
